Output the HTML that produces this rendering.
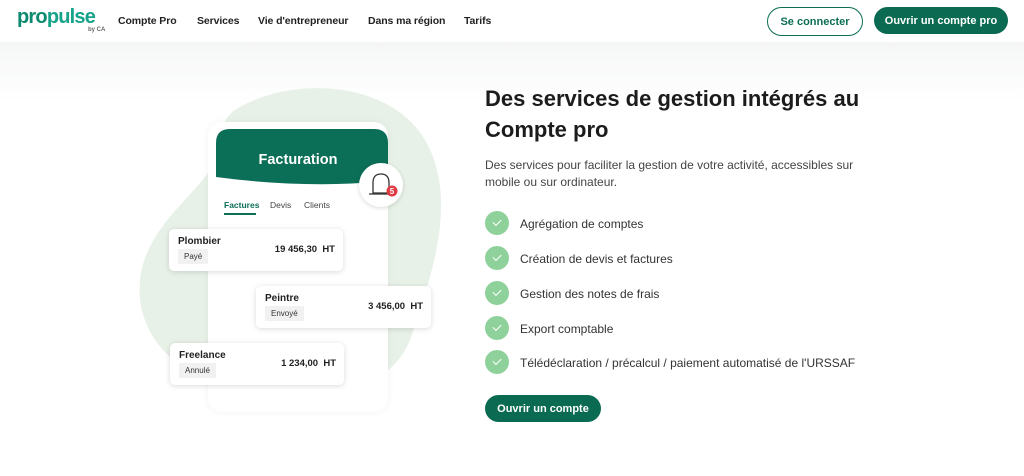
<!DOCTYPE html>
<html><head><meta charset="utf-8"><style>
*{margin:0;padding:0;box-sizing:border-box}
body{width:1024px;height:476px;overflow:hidden;font-family:"Liberation Sans",sans-serif;background:#fff;position:relative;color:#1f1f1f}
.hdr{position:absolute;left:0;top:0;width:1024px;height:42px;background:#fff}
.band{position:absolute;left:0;top:42px;width:1024px;height:60px;background:linear-gradient(#f5f6f6,#fff)}
.logo{position:absolute;left:17px;top:6px;font-size:20px;font-weight:bold;color:#0d8a70;letter-spacing:-0.8px}
.logo span{color:#16a38a}
.ca{position:absolute;left:88px;top:27px;font-size:6px;color:#666;font-weight:bold}
.nav{position:absolute;top:15px;font-size:10.5px;font-weight:bold;color:#222;letter-spacing:-0.1px}
.btn{position:absolute;display:flex;align-items:center;justify-content:center;font-size:11px;font-weight:bold}
.btn1{left:767px;top:7px;width:96px;height:29px;border:1px solid #0d6e55;border-radius:15px;color:#0d6e55}
.btn2{left:874px;top:7px;width:134px;height:27px;background:#0b6b52;border-radius:14px;color:#fff}
.abs{position:absolute}
.card{position:absolute;background:#fff;border-radius:5px;box-shadow:0 1px 6px rgba(0,0,0,.15);width:174px;height:42px}
.card b{position:absolute;left:9px;top:7px;font-size:10px}
.card i{position:absolute;left:9px;top:20px;font-style:normal;font-size:8px;background:#f1f1f1;padding:3px 6px;color:#333}
.card em{position:absolute;right:8px;top:15px;font-style:normal;font-weight:bold;font-size:9.5px}
h1{position:absolute;left:485px;top:83px;font-size:22px;line-height:31px;font-weight:bold;color:#1c1c1c}
.p{position:absolute;left:485px;top:157px;font-size:12px;line-height:17px;color:#444}
.li{position:absolute;left:485px;font-size:12px;color:#333}
.li .c{position:absolute;left:0;top:-6px;width:24px;height:24px;border-radius:50%;background:#8fd19a}
.li .c:after{content:"";position:absolute;left:8px;top:8px;width:7px;height:4px;border-left:1.5px solid #fff;border-bottom:1.5px solid #fff;transform:rotate(-45deg)}
.li span{position:absolute;left:35px;top:0;white-space:nowrap}
.btn3{left:485px;top:395px;width:116px;height:27px;background:#0b6b52;border-radius:14px;color:#fff}
</style></head><body>
<div class="band"></div>
<div class="hdr"></div>
<div class="logo">pro<span>pulse</span></div><div class="ca">by CA</div>
<div class="nav" style="left:118px">Compte Pro</div>
<div class="nav" style="left:197px">Services</div>
<div class="nav" style="left:258px">Vie d'entrepreneur</div>
<div class="nav" style="left:368px">Dans ma région</div>
<div class="nav" style="left:464px">Tarifs</div>
<div class="btn btn1">Se connecter</div>
<div class="btn btn2">Ouvrir un compte pro</div>

<svg class="abs" style="left:130px;top:80px" width="320" height="330">
<path d="M105 30 C160 -5 260 0 295 60 C330 120 300 200 280 260 C260 310 200 320 120 310 C40 300 5 250 10 200 C15 150 60 120 80 90 C90 60 90 40 105 30Z" fill="#e8f1e7"/>
</svg>
<div class="abs" style="left:208px;top:122px;width:180px;height:290px;background:#fff;border-radius:14px;box-shadow:0 0 8px rgba(0,0,0,.05)"></div>
<svg class="abs" style="left:216px;top:129px" width="172" height="60">
<path d="M0 14 Q0 0 14 0 L158 0 Q172 0 172 14 L172 52 Q90 60 0 48 Z" fill="#0b6e57"/>
<text x="82" y="35" text-anchor="middle" font-family="Liberation Sans" font-weight="bold" font-size="14.5" fill="#fff">Facturation</text>
</svg>
<div class="abs" style="left:359px;top:163px;width:44px;height:44px;border-radius:50%;background:#fff;box-shadow:0 1px 5px rgba(0,0,0,.15)"></div>
<svg class="abs" style="left:359px;top:163px" width="44" height="44">
<path d="M14 30 L14 20 Q14 11 22 11 Q30 11 30 20 L30 30 Z M10 31 L34 31" fill="none" stroke="#333" stroke-width="1.3"/>
<circle cx="33" cy="28" r="5.5" fill="#e03a45"/>
<text x="33" y="31" text-anchor="middle" font-size="8" font-weight="bold" fill="#fff" font-family="Liberation Sans">5</text>
</svg>
<div class="abs" style="left:224px;top:200px;font-size:8.5px;font-weight:bold;color:#0b6e57">Factures</div>
<div class="abs" style="left:224px;top:213px;width:32px;height:1.5px;background:#0b6e57"></div>
<div class="abs" style="left:270px;top:200px;font-size:8.5px;color:#444">Devis</div>
<div class="abs" style="left:304px;top:200px;font-size:8.5px;color:#444">Clients</div>
<div class="card" style="left:169px;top:229px"><b>Plombier</b><i>Payé</i><em>19 456,30&nbsp; HT</em></div>
<div class="card" style="left:256px;top:286px;width:175px"><b>Peintre</b><i>Envoyé</i><em>3 456,00&nbsp; HT</em></div>
<div class="card" style="left:170px;top:343px"><b>Freelance</b><i>Annulé</i><em>1 234,00&nbsp; HT</em></div>

<h1>Des services de gestion intégrés au<br>Compte pro</h1>
<div class="p">Des services pour faciliter la gestion de votre activité, accessibles sur<br>mobile ou sur ordinateur.</div>
<div class="li" style="top:217px"><div class="c"></div><span>Agrégation de comptes</span></div>
<div class="li" style="top:252px"><div class="c"></div><span>Création de devis et factures</span></div>
<div class="li" style="top:287px"><div class="c"></div><span>Gestion des notes de frais</span></div>
<div class="li" style="top:322px"><div class="c"></div><span>Export comptable</span></div>
<div class="li" style="top:356px"><div class="c"></div><span>Télédéclaration / précalcul / paiement automatisé de l'URSSAF</span></div>
<div class="btn btn3">Ouvrir un compte</div>
</body></html>
